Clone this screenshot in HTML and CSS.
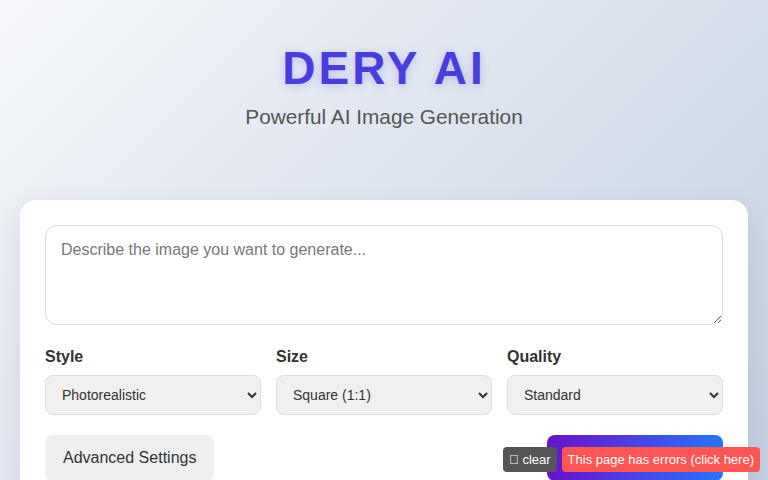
FILE: index.html
```html
<!DOCTYPE html>
<html lang="en">
<head>
<meta charset="utf-8">
<title>DERY AI</title>
<link rel="stylesheet" href="styles.css">
</head>
<body>
<div class="container">
  <header class="header">
    <h1 class="logo">DERY AI</h1>
    <p class="tagline">Powerful AI Image Generation</p>
  </header>
  <main class="card">
    <textarea class="prompt" placeholder="Describe the image you want to generate..."></textarea>
    <div class="options">
      <div class="option">
        <label class="label">Style</label>
        <select class="select"><option>Photorealistic</option></select>
      </div>
      <div class="option">
        <label class="label">Size</label>
        <select class="select"><option>Square (1:1)</option></select>
      </div>
      <div class="option">
        <label class="label">Quality</label>
        <select class="select"><option>Standard</option></select>
      </div>
    </div>
    <div class="actions">
      <button class="btn-adv">Advanced Settings</button>
      <button class="btn-gen">Generate</button>
    </div>
  </main>
</div>
<div class="error-bar">
  <button class="err-clear">&#xf00d; clear</button>
  <button class="err-msg">This page has errors (click here)</button>
</div>
</body>
</html>
```
FILE: styles.css
```css
* { box-sizing: border-box; }
html, body { margin: 0; padding: 0; }
body {
  font-family: "Liberation Sans", Arial, sans-serif;
  min-height: 100vh;
  background: linear-gradient(135deg, #f5f7fa 0%, #c3cfe2 100%);
  background-attachment: fixed;
  color: #333;
  overflow: hidden;
}
.container {
  padding: 40px 20px 20px;
}
.header {
  text-align: center;
  margin-bottom: 68px;
}
.logo {
  margin: 0;
  font-size: 46px;
  line-height: 56px;
  font-weight: 700;
  letter-spacing: 3px;
  color: #4a3ddf;
  text-shadow: 0 2px 10px rgba(99, 80, 230, 0.3);
}
.tagline {
  margin: 6px 0 0;
  font-size: 20.8px;
  line-height: 30px;
  color: #555;
}
.card {
  background: #fff;
  border-radius: 16px;
  padding: 25px;
  box-shadow: 0 10px 30px rgba(0, 0, 0, 0.08);
}
.prompt {
  display: block;
  width: 100%;
  height: 100px;
  padding: 15px;
  border: 1px solid #ddd;
  border-radius: 12px;
  font-family: "Liberation Sans", Arial, sans-serif;
  font-size: 16px;
  color: #333;
  resize: vertical;
}
.prompt::placeholder { color: #777; }
.options {
  display: grid;
  grid-template-columns: repeat(3, 1fr);
  gap: 15px;
  margin-top: 22px;
}
.option { display: flex; flex-direction: column; gap: 8px; }
.label {
  font-size: 16px;
  font-weight: 700;
  line-height: 20px;
  color: #333;
}
.select {
  height: 40px;
  padding: 0 12px;
  border: 1px solid #ddd;
  border-radius: 8px;
  background: #f0f0f0;
  font-family: "Liberation Sans", Arial, sans-serif;
  font-size: 14px;
  color: #333;
}
.actions {
  display: flex;
  justify-content: space-between;
  margin-top: 20px;
}
.btn-adv {
  height: 46px;
  padding: 0 18px;
  border: none;
  border-radius: 8px;
  background: #efefef;
  font-family: "Liberation Sans", Arial, sans-serif;
  font-size: 16px;
  color: #333;
}
.btn-gen {
  width: 176px;
  height: 46px;
  border: none;
  border-radius: 8px;
  background: linear-gradient(90deg, #6a11cb 0%, #2575fc 100%);
  font-family: "Liberation Sans", Arial, sans-serif;
  font-size: 16px;
  font-weight: 700;
  color: #fff;
}
.error-bar {
  position: fixed;
  right: 8px;
  bottom: 8px;
  display: flex;
  gap: 5px;
}
.err-clear, .err-msg {
  height: 25px;
  padding: 0 6px;
  border: none;
  border-radius: 4px;
  font-family: "Liberation Sans", Arial, sans-serif;
  font-size: 13px;
  color: #fff;
}
.err-clear { background: #555; }
.err-msg { background: #f55; }
```
